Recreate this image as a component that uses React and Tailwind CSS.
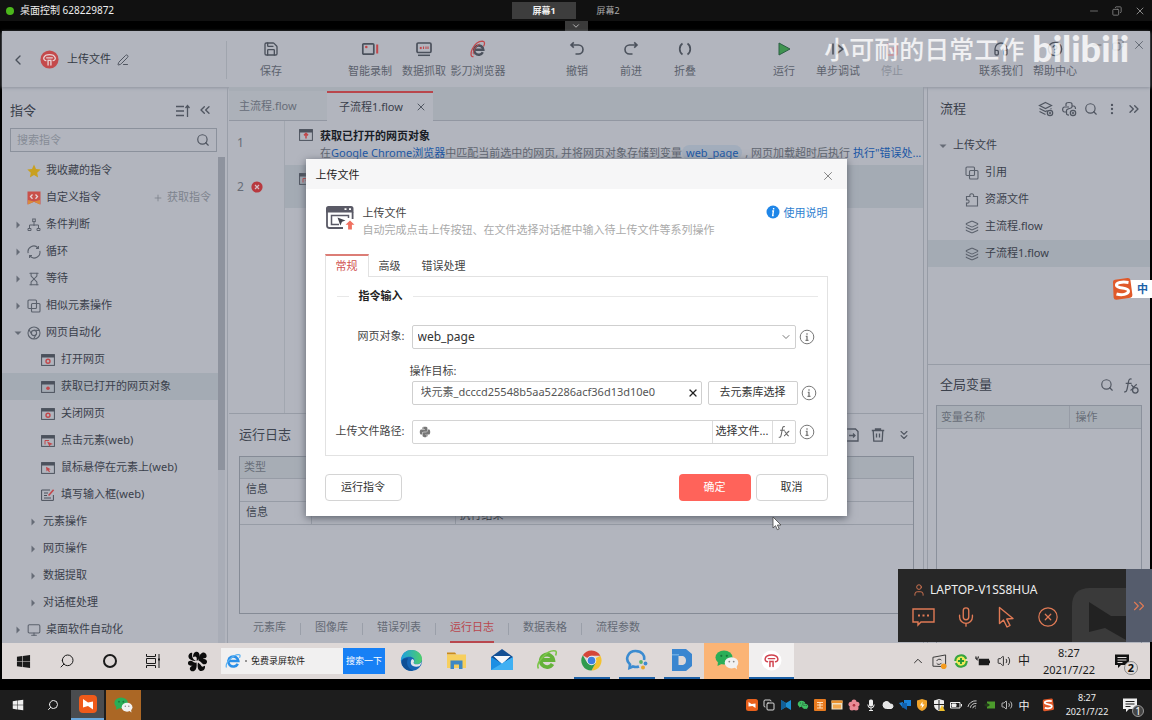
import React from "react";
import {
  ChevronLeft, ChevronDown, ChevronUp, ChevronsLeft, ChevronsRight, ChevronsDown,
  PenLine, Save, Search, X, Minus, Copy, Layers, EllipsisVertical, Mic,
  Hourglass, Monitor, Plus, User, CircleX,
  Volume2, Cloud, Wifi, Headphones, CircleHelp,
} from "lucide-react";
import { AiFillWechat } from "react-icons/ai";
import { FaPython, FaWindows } from "react-icons/fa";

const DARK = "#4b515c";
const RED = "#c2474b";

/* ---------- small drawings ---------- */

function WebIcon({ kind = "circle", className = "" }) {
  return (
    <svg viewBox="0 0 14 12" className={`h-3 w-3.5 shrink-0 ${className}`} fill="none">
      <rect x="0.6" y="0.6" width="12.8" height="10.8" stroke={DARK} />
      <rect x="0.5" y="0.5" width="13" height="3" fill={DARK} />
      {kind === "circle" && <circle cx="7" cy="7.300" r="2" stroke={RED} strokeWidth="1.4" />}
      {kind === "dot" && <circle cx="7" cy="7.300" r="1.8" fill={RED} />}
      {kind === "plus" && <path d="M7 4.6v5M5 6.4l2-2 2 2" stroke={RED} strokeWidth="1.5" />}
      {kind === "click" && (
        <>
          <path d="M4 9.500V5.500h4" stroke={RED} />
          <path d="M6 6.500l6 2.500-2.500.8-.9 2z" fill={RED} />
        </>
      )}
      {kind === "hover" && <path d="M5 4.8l4.8 2.4-2 .5 1.2 2-1 .6-1.2-2-1.2 1.3z" fill={RED} />}
    </svg>
  );
}

function FormIcon() {
  return (
    <svg viewBox="0 0 14 12" className="h-3 w-3.5 shrink-0" fill="none">
      <path d="M9 1H.6v10.4h11.8V6" stroke={DARK} />
      <path d="M3 4h4M3 6.5h3M3 9h7" stroke={DARK} />
      <path d="M12.6.8L7.6 6.6" stroke={RED} strokeWidth="1.6" />
    </svg>
  );
}

function BranchIcon() {
  return (
    <svg viewBox="0 0 14 14" className="size-3.5 shrink-0" fill="none" stroke="#5b616c">
      <path d="M7 3.5V7M2.5 10V7h9v3M7 7v1" />
      <rect x="5.7" y="1" width="2.6" height="2.6" />
      <path d="M1 10.5h3v2H1zM10 10.5h3v2h-3z" />
    </svg>
  );
}

function LoopIcon() {
  return (
    <svg viewBox="0 0 14 14" className="size-3.5 shrink-0" fill="none" stroke="#5b616c" strokeWidth="1.1">
      <path d="M1.2 8.2A5.8 5.8 0 0 1 11 2.8M12.8 5.8A5.8 5.8 0 0 1 3 11.2" />
      <path d="M11.4 1v2.4H9M2.6 13v-2.4H5" />
    </svg>
  );
}

function PairIcon({ className = "" }) {
  return (
    <svg viewBox="0 0 14 14" className={`size-3.5 shrink-0 ${className}`} fill="none" stroke="#5b616c" strokeWidth="1.1">
      <rect x="1" y="1" width="8.5" height="8.5" rx="1" />
      <rect x="4.5" y="4.5" width="8.5" height="8.5" rx="1" />
    </svg>
  );
}

function PuzzleIcon() {
  return (
    <svg viewBox="0 0 14 14" className="size-3.5 shrink-0" fill="none" stroke="#5b616c" strokeWidth="1.1">
      <path d="M1.500 3.500H5C4.300 1.800 5.300.8 6.700.8s2.500 1 1.800 2.700h4V13H1.500V10c1.800.5 2.600-.3 2.600-1.500S3.300 6.600 1.500 7z" />
    </svg>
  );
}

function ChromeOutline() {
  return (
    <svg viewBox="0 0 14 14" className="size-3.5 shrink-0" fill="none" stroke="#5b616c" strokeWidth="1.1">
      <circle cx="7" cy="7" r="6" />
      <circle cx="7" cy="7" r="2.6" />
      <path d="M7 4.4h5.4M4.7 8.3L2 3.7M9.2 8.3l-2.6 4.6" />
    </svg>
  );
}

function StarIcon() {
  return (
    <svg viewBox="0 0 14 14" className="size-3.5 shrink-0" fill="#c9a01f">
      <path d="M7 .6l2 4.3 4.7.6-3.5 3.2.9 4.7L7 11.1l-4.1 2.3.9-4.7L.3 5.5 5 4.9z" />
    </svg>
  );
}

function CustomIcon() {
  return (
    <svg viewBox="0 0 14 14" className="size-3.5 shrink-0" fill="none">
      <path d="M.5.5h13v13L7 10.8.5 13.5z" fill="#c9504a" />
      <path d="M1 9l6 1.5L13 9v4.5L7 10.8 1 13.5z" fill="#d98a3c" />
      <path d="M5.5 3.5L3.5 5.6l2 2.1M8.5 3.5l2 2.1-2 2.1" stroke="#e6d6d8" strokeWidth="1.3" />
    </svg>
  );
}

function RpaMark({ className = "", fg = "#e8d4d6", bg = "#c44a4c" }) {
  return (
    <svg viewBox="0 0 20 20" className={className} fill="none">
      <circle cx="10" cy="10" r="9.5" fill={bg} />
      <path d="M7 8.200h6M6.200 11.200C2.500 10.800 3 4.800 10 4.800s7.500 6 3.800 6.400M8.500 10.800v5M11.500 10.800v5M8.500 11h3" stroke={fg} strokeWidth="1.4" strokeLinecap="round" />
    </svg>
  );
}

function Caret({ open }) {
  return (
    <svg viewBox="0 0 8 8" className="size-2 shrink-0" fill="#666c77">
      {open ? <path d="M.5 2.500h7L4 6z" /> : <path d="M2.500 .5l3.500 3.500-3.500 3.500z" />}
    </svg>
  );
}

function SortIcon() {
  return (
    <svg viewBox="0 0 16 14" className="h-3.5 w-4" fill="none" stroke="#505661" strokeWidth="1.3">
      <path d="M1 2.500h8M1 7h8M1 11.500h8M12.500 13V2M10.500 4l2-2.500 2 2.500" />
    </svg>
  );
}

function RecordIcon() {
  return (
    <svg viewBox="0 0 18 16" className="h-4 w-[18px]" fill="none">
      <rect x="1.800" y="2.800" width="11" height="10.400" rx="1" stroke={DARK} strokeWidth="1.700" />
      <circle cx="5.300" cy="6" r="1.300" fill={RED} />
      <path d="M16.200 3.500v9" stroke={RED} strokeWidth="2" />
    </svg>
  );
}

function GrabIcon() {
  return (
    <svg viewBox="0 0 18 16" className="h-4 w-[18px]" fill="none">
      <rect x="2" y="2" width="14" height="9.500" rx="1.200" stroke={DARK} strokeWidth="1.700" />
      <path d="M3 14.300h12" stroke={DARK} strokeWidth="1.500" />
      <path d="M5 6l1.500 2M6.500 6L5 8M8.500 5.500V8M11 5.500V8M13 5.500V8" stroke={RED} strokeWidth="1.100" />
    </svg>
  );
}

function BrowserIcon() {
  return (
    <svg viewBox="0 0 18 18" className="size-[18px]" fill="none">
      <path d="M13.800 12.200A4.600 4.600 0 1 1 14.300 9.800H6.500" stroke={DARK} strokeWidth="2.500" />
      <path d="M4.500 16.500C-1.500 17.500 4 1.500 13.500 1.200c2.800 0 2.200 3.300 1 5.300" stroke={RED} strokeWidth="1.300" />
      <path d="M5.500 14C2.500 15.500 5 6.500 11 4" stroke={RED} />
    </svg>
  );
}

function UndoIcon({ flip }) {
  return (
    <svg viewBox="0 0 16 16" className={flip ? "size-4 -scale-x-100" : "size-4"} fill="none" stroke={DARK} strokeWidth="1.600">
      <path d="M2 4h7.500a4.500 4.500 0 0 1 0 9H6.500M4.800 1.300L2 4l2.800 2.700" />
    </svg>
  );
}

function FoldIcon() {
  return (
    <svg viewBox="0 0 16 16" className="size-4" fill="none" stroke={DARK} strokeWidth="1.700">
      <path d="M5.500 2.500C1.800 5 1.800 11 5.500 13.500M10.500 2.500c3.700 2.500 3.700 8.500 0 11" />
    </svg>
  );
}

function RunIcon() {
  return (
    <svg viewBox="0 0 16 16" className="size-4" fill="#3f9450" stroke="#2d5f45">
      <path d="M3 2l11 6-11 6z" />
    </svg>
  );
}

function StepIcon() {
  return (
    <svg viewBox="0 0 16 16" className="size-4" fill="none" stroke={DARK} strokeWidth="1.600">
      <path d="M3 2.500v11M7 3.500l6 4.500-6 4.500z" />
    </svg>
  );
}

function StopIcon() {
  return (
    <svg viewBox="0 0 16 16" className="size-4" fill="none" stroke="#c98e96" strokeWidth="1.600">
      <rect x="3" y="3" width="10" height="11" rx="1" />
      <path d="M6.500 6v5M9.500 6v5" />
    </svg>
  );
}

function FxIcon({ className = "", badge }) {
  return (
    <svg viewBox="0 0 16 16" className={className} fill="none" stroke="currentColor" strokeWidth="1.200">
      <path d="M2 14c2 .5 2.500-1 3-3.500L6.200 4C6.600 2 7.500 1.500 9 2M3.500 6H9" />
      <path d="M8.500 7.500c2 0 2.500 5 5 5M14 7c-2 .5-4 5-6 5.500" />
      {badge && <circle cx="12.500" cy="12.500" r="2.600" fill="#b2b5be" />}
    </svg>
  );
}

function BadgedLayers() {
  return (
    <svg viewBox="0 0 16 16" className="size-4" fill="none" stroke="#505661" strokeWidth="1.200">
      <path d="M7.500 1.500l6 3-6 3-6-3zM1.500 7.500l6 3 2-1M1.500 10.500l6 3M13.500 7.500l-1 .5" />
      <circle cx="12" cy="12" r="2.700" />
      <path d="M12 10.800v2.400M10.800 12h2.400" />
    </svg>
  );
}

function BadgedPython() {
  return (
    <svg viewBox="0 0 16 16" className="size-4" fill="none" stroke="#505661" strokeWidth="1.200">
      <path d="M5 5V3c0-2 6-2 6 0v3c0 2-5.500 1-5.500 3.500V11H3.500c-2.500 0-2.500-5 0-5H8M11 5h1.500c1.500 0 2 1.500 2 3M5.500 11v1.500c0 1 1 1.600 2.500 1.700" />
      <circle cx="12" cy="12" r="2.700" />
      <path d="M12 10.800v2.400M10.800 12h2.400" />
    </svg>
  );
}

function ExportIcon() {
  return (
    <svg viewBox="0 0 14 14" className="size-3.5" fill="none" stroke="#505661" strokeWidth="1.300">
      <path d="M1 1h9.500L13 3.500V13H1zM4 7.500h6M8 5.500l2 2-2 2" />
    </svg>
  );
}

function TrashIcon() {
  return (
    <svg viewBox="0 0 14 14" className="size-3.5" fill="none" stroke="#505661" strokeWidth="1.300">
      <path d="M.8 2.500h12.400M4.500 2.500V1h5v1.500M2.200 2.500l.6 10.700h8.400l.6-10.700M5.500 5.500v4M8.500 5.500v4" />
    </svg>
  );
}

function UploadArt() {
  return (
    <svg viewBox="0 0 30 26" className="h-[26px] w-[30px] shrink-0" fill="none">
      <path d="M1 8.500h27.500V4.500A2.500 2.500 0 0 0 26 2H3.500A2.500 2.500 0 0 0 1 4.500z" fill="#5a5a66" />
      <path d="M2 7v14.500a2.500 2.500 0 0 0 2.500 2.500H18M27.600 8v7" stroke="#5a5a66" strokeWidth="1.800" />
      <path d="M14 20.500H6.500V11.500h17V14" stroke="#5a5a66" strokeWidth="1.500" />
      <path d="M12.500 13.500l8 3-3.500 1.300-1.600 3.700z" fill="#44444e" />
      <path d="M19.500 5.200h2M24 5.200h2" stroke="#fff" strokeWidth="1.800" />
      <path d="M25 16.500l4.500 4.300h-2.600v4.700h-3.800v-4.700h-2.600z" fill="#f0705f" />
    </svg>
  );
}

/* ---------- left command panel ---------- */

const commands = [
  { t: "我收藏的指令", l: 1, icon: <StarIcon />, noCaret: true },
  { t: "自定义指令", l: 1, icon: <CustomIcon />, noCaret: true, extra: true },
  { t: "条件判断", l: 1, icon: <BranchIcon /> },
  { t: "循环", l: 1, icon: <LoopIcon /> },
  { t: "等待", l: 1, icon: <Hourglass className="size-3.5 shrink-0 text-[#5b616c]" strokeWidth={1.800} /> },
  { t: "相似元素操作", l: 1, icon: <PairIcon /> },
  { t: "网页自动化", l: 1, icon: <ChromeOutline />, open: true },
  { t: "打开网页", l: 3, icon: <WebIcon /> },
  { t: "获取已打开的网页对象", l: 3, icon: <WebIcon kind="dot" />, active: true },
  { t: "关闭网页", l: 3, icon: <WebIcon /> },
  { t: "点击元素(web)", l: 3, icon: <WebIcon kind="click" /> },
  { t: "鼠标悬停在元素上(web)", l: 3, icon: <WebIcon kind="hover" /> },
  { t: "填写输入框(web)", l: 3, icon: <FormIcon /> },
  { t: "元素操作", l: 2 },
  { t: "网页操作", l: 2 },
  { t: "数据提取", l: 2 },
  { t: "对话框处理", l: 2 },
  { t: "桌面软件自动化", l: 1, icon: <Monitor className="size-3.5 shrink-0 text-[#5b616c]" strokeWidth={1.800} /> },
];

function CommandRow({ c }) {
  const pad = c.l === 1 ? "pl-3" : c.l === 2 ? "pl-[27px]" : "pl-[39px]";
  return (
    <li className={`flex h-[27px] items-center ${pad} ${c.active ? "bg-[#a4abb4]" : ""}`}>
      <button type="button" className="flex items-center text-[#3a404b]">
        {c.l !== 3 && <span className="flex w-3 items-center">{!c.noCaret && <Caret open={c.open} />}</span>}
        {c.icon && <span className={c.l === 3 ? "mr-1.5" : "mr-[5px] ml-px"}>{c.icon}</span>}
        <span className={c.l === 2 ? "ml-0.5" : ""}>{c.t}</span>
      </button>
      {c.extra && (
        <button type="button" className="mr-[7px] ml-auto flex items-center gap-1 text-[#7d838d]">
          <Plus className="size-2.5" />
          获取指令
        </button>
      )}
    </li>
  );
}

function CommandPanel() {
  return (
    <aside className="flex w-[226px] shrink-0 flex-col border-r border-[#9a9fa9]">
      <div className="flex h-[41px] items-end pr-3.5 pb-2 pl-2">
        <h2 className="text-[13px] leading-5 text-[#3a404b]">指令</h2>
        <button type="button" aria-label="排序" className="mb-0.5 ml-auto"><SortIcon /></button>
        <button type="button" aria-label="收起" className="mb-0.5 ml-1.5"><ChevronsLeft className="size-4 text-[#505661]" /></button>
      </div>
      <label className="mr-[10px] ml-2 flex h-6 items-center border border-[#8b919c] px-1.5">
        <input aria-label="搜索指令" placeholder="搜索指令" className="min-w-0 flex-1 bg-transparent outline-none placeholder:text-[#868c96]" />
        <Search className="size-3.5 text-[#505661]" />
      </label>
      <div className="mt-[5px] flex min-h-0 flex-1">
        <ul className="min-w-0 flex-1 overflow-hidden">
          {commands.map((c) => <CommandRow key={c.t} c={c} />)}
        </ul>
        <div className="w-[7px] bg-[#a9adb7]"><div className="h-[313px] bg-[#8e939e]" /></div>
        <div className="w-0.5" />
      </div>
    </aside>
  );
}

/* ---------- toolbar ---------- */

function Tool({ icon, label, muted }) {
  return (
    <button type="button" className={`flex w-[54px] flex-col items-center gap-1 whitespace-nowrap ${muted ? "text-[#8c919b]" : "text-[#5c626d]"}`}>
      <span className="flex h-[18px] items-center">{icon}</span>
      <span className="leading-[18px]">{label}</span>
    </button>
  );
}

function Toolbar() {
  return (
    <header className="flex h-14 shrink-0 items-center bg-[#b2b5be] pt-px shadow-[0_1px_3px_#8f949f]">
      <div className="flex h-[38px] w-[225px] items-center border-r border-[#a0a5ae] pl-2">
        <button type="button" aria-label="返回"><ChevronLeft className="size-4 text-[#4b515c]" /></button>
        <RpaMark className="ml-3.5 size-[19px]" />
        <span className="mr-1.5 ml-2 text-[#343a45]">上传文件</span>
        <button type="button" aria-label="重命名"><PenLine className="size-3 text-[#505661]" /></button>
      </div>
      <div className="ml-[17px] flex flex-1 items-center">
        <Tool icon={<Save className="size-4 text-[#4b515c]" />} label="保存" />
        <div className="ml-[45px] flex">
          <Tool icon={<RecordIcon />} label="智能录制" />
          <Tool icon={<GrabIcon />} label="数据抓取" />
          <Tool icon={<BrowserIcon />} label="影刀浏览器" />
        </div>
        <div className="ml-[45px] flex">
          <Tool icon={<UndoIcon />} label="撤销" />
          <Tool icon={<UndoIcon flip />} label="前进" />
          <Tool icon={<FoldIcon />} label="折叠" />
        </div>
        <div className="ml-[45px] flex">
          <Tool icon={<RunIcon />} label="运行" />
          <Tool icon={<StepIcon />} label="单步调试" />
          <Tool icon={<StopIcon />} label="停止" muted />
        </div>
        <div className="ml-auto flex">
          <Tool icon={<Headphones className="size-4 text-[#4b515c]" />} label="联系我们" />
          <Tool icon={<CircleHelp className="size-4 text-[#4b515c]" />} label="帮助中心" />
        </div>
      </div>
      <div className="flex items-center gap-2 self-start pt-1.5 pr-1 pl-2 text-[#5c626d]">
        <button type="button" aria-label="最小化窗口"><Minus className="size-3.5" strokeWidth={1.500} /></button>
        <button type="button" aria-label="还原窗口"><Copy className="size-3 -scale-x-100" strokeWidth={1.500} /></button>
        <button type="button" aria-label="关闭窗口"><X className="size-3.5" strokeWidth={1.500} /></button>
      </div>
    </header>
  );
}

/* ---------- editor ---------- */

function Editor() {
  return (
    <section className="mr-[3px] ml-px flex min-h-0 flex-1 flex-col border-r border-[#979ca6]">
      <div className="flex h-[34px] items-end border-b border-[#9297a2] bg-[#a7adb5]">
        <button type="button" className="h-[29px] w-[98px] bg-[#acb1b9] pt-0.5 pl-2.5 text-left text-[#676d78]">主流程.flow</button>
        <div className="-mb-px flex h-[30px] w-[106px] items-center border-t-2 border-[#b9464c] bg-[#b2b5be] pl-3">
          <button type="button" className="text-[#3a404b]">子流程1.flow</button>
          <button type="button" aria-label="关闭标签" className="ml-3"><X className="size-3 text-[#505661]" /></button>
        </div>
      </div>
      <div className="flex flex-1">
        <ol className="w-14 shrink-0 border-r border-[#a2a7b0] text-[#676d78]">
          <li className="flex h-11 items-center pl-2 text-xs">1</li>
          <li className="flex h-[43px] items-center gap-[7px] pl-2 text-xs">
            2
            <svg viewBox="0 0 12 12" className="size-3">
              <circle cx="6" cy="6" r="5.600" fill="#b8393f" />
              <path d="M4 4l4 4M8 4l-4 4" stroke="#d5bfc6" strokeWidth="1.200" />
            </svg>
          </li>
        </ol>
        <div className="min-w-0 flex-1">
          <div className="flex h-11 gap-[7px] pt-1.5 pl-3.5">
            <WebIcon kind="plus" className="mt-0.5" />
            <div className="min-w-0">
              <p className="leading-[17px] font-bold text-[#191d26]">获取已打开的网页对象</p>
              <p className="leading-[17px] whitespace-nowrap text-[#5f6570]">
                在<a href="#browser" className="text-[#1b57a5]">Google Chrome浏览器</a>中匹配当前选中的网页, 并将网页对象存储到变量
                <span className="rounded-full bg-[#a2adbc] px-1 text-[#1b57a5]">web_page</span> , 网页加载超时后执行 <a href="#error" className="text-[#1b57a5]">执行"错误处...</a>
              </p>
            </div>
          </div>
          <div className="h-[43px] bg-[#a4abb4] pt-2 pl-3.5"><WebIcon kind="click" /></div>
        </div>
      </div>
    </section>
  );
}

const logTabs = ["元素库", "图像库", "错误列表", "运行日志", "数据表格", "流程参数"];

function LogPanel() {
  return (
    <section className="mr-[3px] ml-px flex h-[230px] shrink-0 flex-col border-t border-r border-[#979ca6] text-[#3f4550]">
      <div className="flex h-[42px] items-center pr-3 pl-2.5">
        <h2 className="text-[13px]">运行日志</h2>
        <div className="ml-auto flex items-center gap-3 text-[#505661]">
          <button type="button" aria-label="导出"><ExportIcon /></button>
          <button type="button" aria-label="清空"><TrashIcon /></button>
          <button type="button" aria-label="收起日志"><ChevronsDown className="size-3.5" /></button>
        </div>
      </div>
      <div className="mr-[9px] ml-2.5 flex-1 border border-[#858b96]">
        <table className="w-full table-fixed border-collapse text-left">
          <thead>
            <tr className="h-[21px] border-b border-[#979ca6] bg-[#a7adb5] text-[#676d78]">
              <th className="w-[71px] border-r border-[#979ca6] px-1 py-0 font-normal">类型</th>
              <th className="w-[144px] border-r border-[#979ca6] p-0 font-normal" />
              <th className="p-0 font-normal" />
            </tr>
          </thead>
          <tbody>
            <tr className="h-[23px] border-b border-[#979ca6]">
              <td className="border-r border-[#979ca6] px-1.5 py-0">信息</td>
              <td className="border-r border-[#979ca6] p-0" />
              <td className="p-0" />
            </tr>
            <tr className="h-[23px] border-b border-[#979ca6]">
              <td className="border-r border-[#979ca6] px-1.5 py-0">信息</td>
              <td className="border-r border-[#979ca6] p-0" />
              <td className="px-1 py-0 align-bottom text-[#191d26]">执行结果</td>
            </tr>
          </tbody>
        </table>
      </div>
      <nav className="flex h-[29px] items-stretch text-[#646a75]">
        {logTabs.map((t, i) => (
          <div key={t} className={`flex items-center ${i === 0 ? "pl-2.5" : ""}`}>
            {i > 0 && <span className="h-3 w-px bg-[#9a9fa9]" />}
            <button type="button" className={`mx-3.5 h-full ${t === "运行日志" ? "border-b-2 border-[#b8474d] text-[#b8474d]" : "border-b-2 border-transparent"}`}>{t}</button>
          </div>
        ))}
      </nav>
    </section>
  );
}

/* ---------- right panel ---------- */

const files = [
  { t: "引用", icon: <PairIcon /> },
  { t: "资源文件", icon: <PuzzleIcon /> },
  { t: "主流程.flow", icon: <Layers className="size-3.5" strokeWidth={1.800} /> },
  { t: "子流程1.flow", icon: <Layers className="size-3.5" strokeWidth={1.800} />, active: true },
];

function FlowPanel() {
  return (
    <aside className="flex w-[223px] shrink-0 flex-col border-l border-[#979ca6] text-[#3a404b]">
      <div className="flex h-[45px] items-center pr-2 pb-0.5 pl-3 text-[#505661]">
        <h2 className="text-[13px] text-[#3a404b]">流程</h2>
        <div className="ml-auto flex items-center gap-[7px]">
          <button type="button" aria-label="新建流程"><BadgedLayers /></button>
          <button type="button" aria-label="新建代码"><BadgedPython /></button>
          <button type="button" aria-label="搜索流程"><Search className="size-3.5" /></button>
          <button type="button" aria-label="更多"><EllipsisVertical className="size-3.5" /></button>
          <button type="button" aria-label="收起流程"><ChevronsRight className="size-4" /></button>
        </div>
      </div>
      <div className="flex-1">
        <button type="button" className="flex h-[27px] items-center gap-1.5 pl-[11px]"><Caret open />上传文件</button>
        <ul>
          {files.map((f) => (
            <li key={f.t} className={f.active ? "bg-[#a4abb4]" : ""}>
              <button type="button" className="flex h-[27px] w-full items-center gap-1.5 pl-[37px]"><span className="text-[#5b616c]">{f.icon}</span>{f.t}</button>
            </li>
          ))}
        </ul>
      </div>
      <div className="flex h-[279px] flex-col border-t border-[#979ca6] pr-2 pl-2">
        <div className="flex h-10 items-center pr-[3px] pl-1 text-[#505661]">
          <h2 className="text-[13px] text-[#3a404b]">全局变量</h2>
          <button type="button" aria-label="搜索变量" className="ml-auto"><Search className="size-3.5" /></button>
          <button type="button" aria-label="新建变量" className="ml-2"><FxIcon badge className="size-[17px]" /></button>
        </div>
        <div className="flex-1 border border-b-0 border-[#8b919c]">
          <table className="w-full table-fixed border-collapse text-left">
            <thead>
              <tr className="h-[22px] border-b border-[#979ca6] bg-[#a7adb5] text-[#676d78]">
                <th className="border-r border-[#979ca6] px-1 py-0 font-normal">变量名称</th>
                <th className="w-[72px] px-1.5 py-0 font-normal">操作</th>
              </tr>
            </thead>
          </table>
        </div>
      </div>
    </aside>
  );
}

/* ---------- dialog ---------- */

function InfoButton() {
  return (
    <button type="button" aria-label="说明" className="ml-[3px] shrink-0">
      <svg viewBox="0 0 16 16" className="size-4" fill="none" stroke="#777">
        <circle cx="8" cy="8" r="6.800" />
        <path d="M8 4.300v1.400M6.800 7.300H8v4M6.500 11.400h3" strokeWidth="1.300" />
      </svg>
    </button>
  );
}

function Dialog() {
  return (
    <div role="dialog" aria-labelledby="dlg-title" className="w-[541px] bg-white text-[#444] shadow-[0_2px_8px_#5c616b]">
      <div className="flex h-[30px] items-center justify-between bg-[#f6f6f7] pt-1 pr-3 pl-2.5">
        <h1 id="dlg-title" className="text-[#222]">上传文件</h1>
        <button type="button" aria-label="关闭"><X className="size-3.5 text-[#777]" strokeWidth={1.500} /></button>
      </div>
      <div className="px-[19px] pb-[15px]">
        <div className="flex items-start pt-[15px]">
          <UploadArt />
          <div className="ml-2 leading-[17px]">
            <p>上传文件</p>
            <p className="text-[#aaa]">自动完成点击上传按钮、在文件选择对话框中输入待上传文件等系列操作</p>
          </div>
          <a href="#help" className="ml-auto flex items-center gap-1 leading-[17px] text-[#2f7fd0]">
            <svg viewBox="0 0 14 14" className="size-3.5">
              <circle cx="7" cy="7" r="6.500" fill="#1f86e8" />
              <path d="M7.600 3v1.500M6.200 6h1.200l-.7 4.500h1" stroke="#fff" strokeWidth="1.400" fill="none" />
            </svg>
            使用说明
          </a>
        </div>
        <div role="tablist" className="relative z-10 mt-4 -mb-px flex h-[23px] items-stretch">
          <button type="button" role="tab" aria-selected="true" className="w-11 border-x border-t-2 border-x-[#e2e2e2] border-t-[#dc7d76] bg-white text-[#d0514f]">常规</button>
          <button type="button" role="tab" className="w-[42px] pt-0.5">高级</button>
          <button type="button" role="tab" className="w-[66px] pt-0.5">错误处理</button>
        </div>
        <div className="border border-[#e2e2e2] px-[9px] pt-2 pb-[11px]">
          <div className="flex h-6 items-center pl-0.5">
            <span className="h-px w-3 bg-[#e8e8e8]" />
            <h2 className="mx-2.5 font-bold text-[#222]">指令输入</h2>
            <span className="h-px flex-1 bg-[#e8e8e8]" />
          </div>
          <div className="mt-4 flex items-center">
            <label htmlFor="page" className="w-[70px] text-right">网页对象:</label>
            <div className="relative ml-[7px] w-[384px]">
              <select id="page" className="h-6 w-full appearance-none rounded-xs border border-[#cfcfcf] bg-white px-[5px] text-xs text-[#333]">
                <option>web_page</option>
              </select>
              <ChevronDown className="pointer-events-none absolute top-1.5 right-1 size-3 text-[#777]" />
            </div>
            <InfoButton />
          </div>
          <label htmlFor="target" className="mt-[13px] ml-[75px] block h-[18px] leading-[18px]">操作目标:</label>
          <div className="mt-px flex items-center pl-[77px]">
            <div className="flex h-6 w-[290px] items-center rounded-xs border border-[#cfcfcf] pr-0.5 pl-2">
              <input id="target" defaultValue="块元素_dcccd25548b5aa52286acf36d13d10e0" className="min-w-0 flex-1 text-[#555] outline-none" />
              <button type="button" aria-label="清除目标"><X className="size-3 text-[#222]" strokeWidth={2.500} /></button>
            </div>
            <button type="button" className="ml-1.5 h-6 w-[90px] rounded-xs border border-[#cfcfcf] text-[#333]">去元素库选择</button>
            <InfoButton />
          </div>
          <div className="mt-[15px] flex items-center">
            <label htmlFor="path" className="w-[70px] text-right whitespace-nowrap">上传文件路径:</label>
            <div className="ml-[7px] flex h-6 w-[384px] items-stretch rounded-xs border border-[#d4d4d4]">
              <FaPython className="ml-1.5 size-3 self-center text-[#777]" />
              <input id="path" className="min-w-0 flex-1 px-1 outline-none" />
              <button type="button" className="w-[60px] border-l border-[#dcdcdc] whitespace-nowrap text-[#333]">选择文件...</button>
              <button type="button" aria-label="表达式" className="flex w-[23px] items-center justify-center border-l border-[#dcdcdc]"><FxIcon className="size-3.5 text-[#666]" /></button>
            </div>
            <InfoButton />
          </div>
        </div>
        <div className="mt-[18px] flex text-[#333]">
          <button type="button" className="h-[27px] w-[77px] rounded-sm border border-[#d4d4d4]">运行指令</button>
          <button type="button" className="ml-auto h-[27px] w-[72px] rounded-sm bg-[#ff635a] text-white">确定</button>
          <button type="button" className="ml-[5px] h-[27px] w-[72px] rounded-sm border border-[#d4d4d4]">取消</button>
        </div>
      </div>
    </div>
  );
}

/* ---------- overlays ---------- */

function Watermark() {
  return (
    <div aria-hidden="true" className="pointer-events-none absolute -top-2 right-[23px] flex h-[46px] items-center gap-2 text-white/80">
      <span className="pt-1.5 text-[25px] leading-none font-medium">小可耐的日常工作</span>
      <span className="pt-1 font-['Lato',sans-serif] text-[36px] leading-none font-black">bilibili</span>
    </div>
  );
}

function SogouS({ className = "" }) {
  return (
    <svg viewBox="0 0 24 24" className={className} fill="none">
      <path d="M3 5Q2.800 3 5 2.700L17.500 1Q20 .8 20.400 3l2 15q.2 2.300-2 2.700L6.500 22.800Q4 23 3.600 20.600z" fill="#e0592a" />
      <path d="M18.500 5.500C12 4.500 6 5.500 6.500 8.500c.5 3.500 12 1.500 12 5.500 0 3.500-7 4.500-12 3" stroke="#fff" strokeWidth="3" />
    </svg>
  );
}

function SessionPanel() {
  const tint = "text-[#e07a55]";
  return (
    <div className="absolute right-0 bottom-px flex h-[73px] w-[254px]">
      <div className="relative flex-1 overflow-hidden bg-[#272727] px-3.5 pt-[11px]">
        <svg viewBox="0 0 54 54" className="absolute right-0 bottom-0 h-[54px] w-[54px]">
          <path d="M0 54V18Q0 0 18 0h36v54z" fill="#3a3a3a" />
          <path d="M17 14l22 14h15v24L33 40l-16 4z" fill="#222" />
        </svg>
        <div className="relative flex items-center gap-1 text-xs leading-5 text-[#eee]">
          <User className={`size-3.5 ${tint}`} strokeWidth={1.500} />
          LAPTOP-V1SS8HUA
        </div>
        <div className={`relative mt-1.5 flex items-center gap-5 ${tint}`}>
          <button type="button" aria-label="聊天">
            <svg viewBox="0 0 23 22" className="h-[22px] w-[23px]" fill="none" stroke="currentColor" strokeWidth="1.400">
              <path d="M1 3h21v13H9l-3 3v-3H1z" />
              <path d="M6 9.500h2M10.500 9.500h2M15 9.500h2" strokeWidth="2" />
            </svg>
          </button>
          <button type="button" aria-label="语音"><Mic className="size-[22px]" strokeWidth={1.500} /></button>
          <button type="button" aria-label="指针">
            <svg viewBox="0 0 20 22" className="h-[22px] w-5" fill="none" stroke="currentColor" strokeWidth="1.400" strokeLinejoin="round">
              <path d="M2.500 1.500v16l4-3.500 3.500 7 3-1.600-3.300-6.400 6.300-.5z" />
            </svg>
          </button>
          <button type="button" aria-label="断开"><CircleX className="size-[22px]" strokeWidth={1.300} /></button>
        </div>
      </div>
      <button type="button" aria-label="收起会话" className="flex w-[26px] items-center justify-center bg-[#555c6c]"><ChevronsRight className={`size-[18px] ${tint}`} strokeWidth={1.500} /></button>
    </div>
  );
}

/* ---------- taskbars ---------- */

function WeChat({ className = "" }) {
  return (
    <svg viewBox="0 0 24 20" className={className}>
      <ellipse cx="9" cy="7.500" rx="8.500" ry="7" fill="#2aae57" />
      <path d="M3 12l-.5 4 4-2z" fill="#2aae57" />
      <circle cx="6.300" cy="5.800" r="1.100" fill="#17763a" />
      <circle cx="11.800" cy="5.800" r="1.100" fill="#17763a" />
      <ellipse cx="16.500" cy="12.800" rx="6.800" ry="5.600" fill="#f1f1f1" />
      <path d="M19 17l3 2.500-.5-4z" fill="#f1f1f1" />
      <circle cx="14.300" cy="11.600" r=".9" fill="#888" />
      <circle cx="18.700" cy="11.600" r=".9" fill="#888" />
    </svg>
  );
}

function EdgeLogo() {
  return (
    <svg viewBox="0 0 24 24" className="size-[23px]">
      <defs>
        <linearGradient id="edge-top" x1="0" x2="1"><stop offset="0" stopColor="#1c9fe0" /><stop offset="1" stopColor="#4fcf6a" /></linearGradient>
      </defs>
      <circle cx="12" cy="12" r="11" fill="#1565b5" />
      <path d="M1 11C2 4 7 1 12 1c7 0 11 5 11 9.500 0 4-3 5.500-5.500 5.500-3 0-4-1.500-3-2.500 1.500-3-1-5.500-4.500-5.500S2 9.500 1 13z" fill="url(#edge-top)" />
      <path d="M14.500 13.500c-1 1 0 2.500 3 2.500 2 0 4-.8 5-2.500-.3 1.500-1 3-2 4.200-3 1.500-8 .8-9-2-.8-2.700.5-5 1.500-5.200 1.500.5 2 2 1.500 3z" fill="#e3e6ea" />
      <path d="M8.500 10c-3 5 0 11 5.500 12.500-6 1.500-12-3-12.500-9C3 9.500 6 9 8.500 10z" fill="#0d4f96" />
    </svg>
  );
}

function FolderLogo() {
  return (
    <svg viewBox="0 0 22 20" className="h-5 w-[22px]">
      <path d="M1 2.500h8l1.500 2H1z" fill="#c98a1d" />
      <path d="M1 4.500h19V18H1z" fill="#f7cf5e" />
      <path d="M4.500 19V10.500h12V19H13v-4.500H8V19z" fill="#3e88c4" />
    </svg>
  );
}

function MailLogo() {
  return (
    <svg viewBox="0 0 22 22" className="size-[22px]">
      <path d="M0 8L11 0l11 8v6H0z" fill="#134f94" />
      <path d="M2.500 7h17L11 15z" fill="#f5f7fa" />
      <path d="M0 8l11 6.500L22 8v13H0z" fill="#1c8fe3" />
      <path d="M0 21l22-13v13z" fill="#3fb0f3" />
      <path d="M3 7h16l-8 7.500z" fill="#f5f7fa" />
    </svg>
  );
}

function GreenE() {
  return (
    <svg viewBox="0 0 22 22" className="size-[22px]" fill="none">
      <path d="M16.500 15A6.300 6.300 0 1 1 17.300 11H6.500" stroke="#64b23a" strokeWidth="3.800" />
      <path d="M2.500 19.500C-1 14 12 0 19.500 2c1.200.4.800 3 0 4.500" stroke="#7cc64a" strokeWidth="1.600" />
    </svg>
  );
}

function BlueE({ className = "" }) {
  return (
    <svg viewBox="0 0 16 16" className={className} fill="none">
      <path d="M12.800 10.800A5 5 0 1 1 13.300 8H4.500" stroke="#2a8fe8" strokeWidth="2.600" />
      <path d="M1.500 14.500C-.5 10 9 .5 14.500 1.800c1 .3.500 2 0 3" stroke="#59b1f2" strokeWidth="1.200" />
    </svg>
  );
}

function ChromeLogo() {
  return (
    <svg viewBox="0 0 22 22" className="size-[21px]">
      <path d="M11 11L1.900 5.500A10.600 10.600 0 0 1 20.300 6H11z" fill="#d5463a" />
      <path d="M11 11h0L20.300 6A10.600 10.600 0 0 1 11 21.600L15.500 13z" fill="#f3c22f" />
      <path d="M11 11l4.300 2.500L11 21.600A10.600 10.600 0 0 1 1.900 5.500L6.700 13.500z" fill="#2f9a4d" />
      <circle cx="11" cy="11" r="5" fill="#f2f2f2" />
      <circle cx="11" cy="11" r="4" fill="#3f7fe0" />
    </svg>
  );
}

function ChatLogo() {
  return (
    <svg viewBox="0 0 24 22" className="h-[22px] w-6" fill="none">
      <path d="M14 17.500c-2 .7-4 .7-6 0L4.500 19l.5-3.500C-1 10 3.500 2 10.500 2S20 7 19 11" stroke="#3b8bd0" strokeWidth="2.600" />
      <circle cx="16" cy="13" r="1.900" fill="#58b368" />
      <circle cx="20.500" cy="14.500" r="1.900" fill="#3b8bd0" />
      <circle cx="18" cy="18.500" r="2" fill="#e8a52c" />
    </svg>
  );
}

function BlueD() {
  return (
    <svg viewBox="0 0 20 22" className="h-[22px] w-5">
      <path d="M0 0h14l6 5v12l-6 5H0zM6.500 7v9H11q3-1 3-4.500T11 7z" fill="#3a86d0" fillRule="evenodd" />
      <path d="M0 5h7v1.500H0z" fill="#6aaae2" />
    </svg>
  );
}

function PinwheelLogo() {
  return (
    <svg viewBox="0 0 22 22" className="size-[21px]" fill="#0c0c0c">
      <path d="M10 10.500C11 6 9 5 6.500 6.500 6 3 8 .8 10 .8s3.500 1.700 3.200 4.500C13 8 12 9.500 10 10.500z" />
      <path d="M12 10c0-4 2-8 5-8.500 2.500 0 4 2.500 3.500 4.500-.5 1.800-2.500 1.500-4 1.800 2 .5 4.500 1 4.500 3.500 0 2.700-3.500 3.500-5 1.700C14 11 13.500 10.500 12 10z" />
      <path d="M11.500 12c2.500 1.500 3.500 3.500 3.800 4 .7 1 2.500 0 3.500-.5.500 2.500-.8 5.500-3.800 5.500-3.500 0-4.500-4.500-3.500-9z" />
      <path d="M10 12c.5 4 0 7.500-2.500 9-2 1-5-.5-4.500-3 .3-1.500 2-2 3-2.500C3.500 15.500 1 15 1 12.500c0-2.500 3.500-3 5-1.500 1.500 1.300 2.500 1.500 4 1z" />
      <path d="M9.500 10.500C6 10.500 2 9 1.500 6 1.200 3.500 3.500 1.500 5.500 2c-.5 3 0 6.500 4 8.500z" />
    </svg>
  );
}

function Notice({ count, className = "", badge }) {
  return (
    <button type="button" aria-label="通知" className={`relative flex shrink-0 items-center justify-center ${className}`}>
      <svg viewBox="0 0 16 16" className="size-4">
        <path d="M1 1.500h14v10.500H7L4 15v-3H1z" fill="currentColor" />
        <path d="M3.500 4.500h9M3.500 7h9M3.500 9.500h5" stroke={badge === "light" ? "#ded9d8" : "#1f1f1f"} />
      </svg>
      <span className={badge === "light"
        ? "absolute -right-1.5 -bottom-1 flex size-3.5 items-center justify-center rounded-full border border-[#888] bg-[#ded9d8] text-[11px] font-bold text-[#111]"
        : "absolute -right-1 -bottom-0.5 flex size-3 items-center justify-center rounded-full border border-[#999] bg-[#444] text-[10px] text-white"}>{count}</span>
    </button>
  );
}

const apps = [
  { n: "Edge", i: <EdgeLogo /> },
  { n: "文件资源管理器", i: <FolderLogo /> },
  { n: "邮件", i: <MailLogo /> },
  { n: "360浏览器", i: <GreenE /> },
  { n: "Chrome", i: <ChromeLogo />, on: true },
  { n: "企业微信", i: <ChatLogo />, on: true },
  { n: "文档", i: <BlueD />, on: true },
  { n: "微信", i: <WeChat className="h-5 w-6" />, cls: "bg-[#fbb475]" },
  { n: "影刀", i: <RpaMark className="size-[21px]" bg="#ffffff" fg="#d0424e" />, cls: "bg-[#f1efef]", on: true, wide: true },
];

function RemoteTaskbar() {
  return (
    <footer className="mx-0.5 flex h-9 shrink-0 items-center bg-[#ded8d7] text-[#1a1a1a]">
      <button type="button" aria-label="开始" className="flex w-[43px] justify-center"><FaWindows className="size-[15px]" /></button>
      <button type="button" aria-label="搜索" className="flex w-[43px] justify-center"><Search className="size-4 -scale-x-100" strokeWidth={1.500} /></button>
      <button type="button" aria-label="助手" className="flex w-[43px] justify-center"><span className="size-3.5 rounded-full border-2 border-[#1a1a1a]" /></button>
      <button type="button" aria-label="任务视图" className="flex w-[43px] justify-center">
        <svg viewBox="0 0 16 16" className="size-4" fill="none" stroke="currentColor">
          <path d="M1.500 1v2.500h9V1M1.500 15v-2.500h9V15M1.500 5.500h9v5h-9zM14 1v14" />
          <path d="M13 6.500h2" strokeWidth="2" />
        </svg>
      </button>
      <button type="button" aria-label="应用" className="flex w-[47px] justify-center"><PinwheelLogo /></button>
      <div className="flex h-[26px] w-[164px] items-center bg-[#f1f0f0] pl-1">
        <BlueE className="size-4" />
        <span className="mx-1 size-0.5 rounded-full bg-[#777]" />
        <input aria-label="搜索内容" defaultValue="免费录屏软件" className="min-w-0 flex-1 text-[9px] text-[#222] outline-none" />
        <button type="button" className="h-full w-[42px] bg-[#1780f5] text-[9px] text-white">搜索一下</button>
      </div>
      <div className="ml-1 flex h-full">
        {apps.map((a) => (
          <button key={a.n} type="button" aria-label={a.n} className={`flex w-[45px] flex-col items-center ${a.cls ?? ""}`}>
            <span className="flex flex-1 items-center">{a.i}</span>
            <span className={`h-0.5 ${a.wide ? "w-full" : "w-9"} ${a.on ? "bg-[#1c5fa5]" : ""}`} />
          </button>
        ))}
      </div>
      <div className="ml-auto flex items-center gap-[7px]">
        <ChevronUp className="size-3.5" strokeWidth={1.500} />
        <svg viewBox="0 0 16 16" className="size-[15px]" fill="none" stroke="#333">
          <path d="M1 3.500L14.500 1v12.500L1 13z" />
          <path d="M5 7.500a3 3 0 0 1 5-1M10 9.500a3 3 0 0 1-5 .5" />
          <circle cx="12.500" cy="13" r="3" fill="#f39a1e" stroke="none" />
        </svg>
        <svg viewBox="0 0 16 16" className="size-3.5" fill="none">
          <circle cx="8" cy="8" r="6" fill="#f0ea5a" />
          <path d="M1.500 8a6.500 6.500 0 0 1 12.500-2.500" stroke="#35a53e" strokeWidth="2.400" />
          <path d="M14.500 8A6.500 6.500 0 0 1 2 10.500" stroke="#35a53e" strokeWidth="2.400" />
          <path d="M8 4.500v7M4.500 8h7" stroke="#259a36" strokeWidth="2.200" />
        </svg>
        <svg viewBox="0 0 16 12" className="h-3 w-[15px]">
          <path d="M4 3.500h11v7H4zM15 5.500h1v3h-1z" fill="#1a1a1a" />
          <path d="M1 1v2q0 2 2.500 2M.5 3h3V1" stroke="#1a1a1a" fill="none" />
        </svg>
        <Volume2 className="size-3.5" strokeWidth={1.500} />
        <span className="text-xs leading-none">中</span>
      </div>
      <time className="ml-[3px] w-[72px] text-center text-[11px] leading-[17px]">8:27<br />2021/7/22</time>
      <Notice count="2" badge="light" className="mr-[18px] ml-[7px] size-5 text-[#111]" />
    </footer>
  );
}

const S = "size-3";
const tray = [
  <svg viewBox="0 0 12 12" className={S}><rect width="12" height="12" rx="2.500" fill="#e8601c" /><path d="M2.500 3l3 2 4-.5V9l-3-2-4 .5z" fill="#fff" /></svg>,
  <Copy className={S} strokeWidth={1.800} />,
  <svg viewBox="0 0 12 12" className={S}><path d="M1 1l5 3 5-3v10L6 8l-5 3z" fill="#1e8fd0" /><path d="M1 1l5 3v4l-5 3z" fill="#126098" /></svg>,
  <AiFillWechat className={`${S} text-[#3fbf63]`} />,
  <svg viewBox="0 0 12 12" className={S}><rect width="12" height="12" rx="1" fill="#e77a1f" /><path d="M3 3.500h6M6 3v6M3 9h6M3 6h6" stroke="#ffe2c0" /></svg>,
  <svg viewBox="0 0 12 12" className={S}><path d="M.5 1.500h11v9H.5z" fill="#f0dfc0" /><path d="M.5 1.500h11v2.500H.5z" fill="#e8912f" /><path d="M2 5.500h8v4H2z" fill="#f2a84e" /></svg>,
  <svg viewBox="0 0 12 12" className={S} fill="#e98a96"><circle cx="6" cy="3" r="2.500" /><circle cx="9" cy="5.300" r="2.500" /><circle cx="8" cy="9" r="2.500" /><circle cx="4" cy="9" r="2.500" /><circle cx="3" cy="5.300" r="2.500" /><circle cx="6" cy="6.300" r="1.300" fill="#b3323f" /></svg>,
  <svg viewBox="0 0 12 12" className={S}><rect x="4" y=".5" width="4" height="7" rx="1.500" fill="#eee" /><path d="M2.800 5.500q0 3.500 3.200 3.500t3.200-3.500M6 9v2.500M4 11.500h4" stroke="#eee" fill="none" /></svg>,
  <Cloud className={S} fill="#e5e5e5" />,
  <svg viewBox="0 0 12 12" className={S}><path d="M0 4l4-1v6zM5 1h7v6H5z" fill="#1b84dd" /><path d="M3 4h5v7L3 8z" fill="#1261ad" /></svg>,
  <svg viewBox="0 0 12 12" className={S}><path d="M6 0l5 1.500V6q0 4-5 6Q1 10 1 6V1.500z" fill="#f0a42b" /><path d="M6.500 2.500L4 6.500h2L5.500 9.500 8.500 5.500h-2z" fill="#fff" /></svg>,
  <svg viewBox="0 0 12 12" className={S}><path d="M6 0l5 1.500V6q0 4-5 6Q1 10 1 6V1.500z" fill="#eee" /><path d="M6 1v10M1 5.500h10" stroke="#222" /><path d="M9 6l3 6H6z" fill="#f0c02b" /></svg>,
  <svg viewBox="0 0 12 12" className={S} fill="none" stroke="#eee"><path d="M.5 3.500h9.500v5.500H.5zM11.500 5v2.500" /><path d="M2 5h4v2.500H2z" fill="#eee" /></svg>,
  <Wifi className={`${S} rotate-[-35deg]`} strokeWidth={1.500} />,
  <svg viewBox="0 0 12 12" className={S}><path d="M3 2.500h8v7H3z" fill="#4c9b2c" /><path d="M0 6q3-3.500 6 0-3 3.500-6 0z" fill="#243a1c" /></svg>,
  <Volume2 className={S} strokeWidth={1.500} />,
  <span className="text-[11px] leading-none">中</span>,
];

function LocalTaskbar() {
  return (
    <footer className="mt-[11px] flex h-[30px] shrink-0 items-center bg-[#1d1d1d] text-[#eee]">
      <button type="button" aria-label="开始菜单" className="flex w-[35px] justify-center"><FaWindows className="size-3" /></button>
      <button type="button" aria-label="本机搜索" className="flex w-9 justify-center"><Search className="size-3 -scale-x-100" /></button>
      <button type="button" aria-label="远程控制" className="flex h-full w-[33px] items-center justify-center border-b-2 border-[#69a7dc] bg-[#4a4c4f]">
        <svg viewBox="0 0 18 18" className="size-[18px]">
          <rect width="18" height="18" rx="4" fill="#ef5a1a" />
          <path d="M4 4l5 3.500 5-1v8L9 11l-5 1.500z" fill="#fff" />
        </svg>
      </button>
      <button type="button" aria-label="本机微信" className="ml-0.5 flex h-full w-[35px] items-center justify-center bg-[#ab6725]"><WeChat className="h-4 w-[19px]" /></button>
      <div className="ml-auto flex items-center gap-[5px]">
        {tray.map((icon, i) => <span key={i} className="flex w-3 justify-center">{icon}</span>)}
        <SogouS className="ml-1.5 size-3.5" />
      </div>
      <time className="w-16 text-center text-[9px] leading-3.5">8:27<br />2021/7/22</time>
      <Notice count="1" className="mr-3 ml-px size-5" />
    </footer>
  );
}

export default function App() {
  return (
    <div className="flex min-h-screen flex-col bg-black font-['Noto_Sans','Noto_Sans_CJK_SC',sans-serif] text-[11px]">
      <div className="flex h-[21px] shrink-0 items-center bg-[#111] text-[10px] text-[#eee]">
        <div className="flex flex-1 items-center gap-1.5 pl-1.5"><span className="size-2 rounded-full bg-[#4cb81c]" />桌面控制 628229872</div>
        <div className="flex h-full items-center text-[9px]">
          <button type="button" className="h-[17px] w-16 bg-[#3d3d3d] font-bold">屏幕1</button>
          <button type="button" className="h-[17px] w-16 text-[#aaa]">屏幕2</button>
        </div>
        <div className="flex flex-1 items-center justify-end gap-3 pr-1.5 text-[#888]">
          <button type="button" aria-label="最小化"><Minus className="size-3" strokeWidth={1.500} /></button>
          <button type="button" aria-label="还原"><Copy className="size-2.5 -scale-x-100" /></button>
          <button type="button" aria-label="退出"><X className="size-3" /></button>
        </div>
      </div>
      <div className="flex h-2.5 justify-center">
        <button type="button" aria-label="展开" className="flex w-[23px] items-center justify-center bg-[#3a3a3a]"><ChevronDown className="size-2.5 text-[#ccc]" /></button>
      </div>

      <main className="relative flex flex-1 flex-col px-0.5">
        <div className="flex flex-1 flex-col bg-[#b2b5be]">
          <Toolbar />
          <div className="flex min-h-0 flex-1">
            <CommandPanel />
            <div className="flex min-w-0 flex-1 flex-col">
              <Editor />
              <LogPanel />
            </div>
            <FlowPanel />
          </div>
        </div>
        <div className="absolute inset-0 flex items-center justify-center"><Dialog /></div>
        <Watermark />
        <div className="absolute top-[246px] right-0 flex items-center">
          <SogouS className="z-10 -mr-2 size-6" />
          <span className="flex h-[18px] w-[26px] items-center justify-end bg-white pr-1 font-bold text-[#1d62a8]">中</span>
        </div>
        <SessionPanel />
        <svg viewBox="0 0 10 15" className="absolute top-[485px] left-[772px] h-[15px] w-2.5">
          <path d="M1 1v11l2.500-2.300 1.800 4 1.900-.8-1.800-3.900H9z" fill="#fff" stroke="#444" strokeWidth=".8" />
        </svg>
      </main>

      <RemoteTaskbar />
      <LocalTaskbar />
    </div>
  );
}
